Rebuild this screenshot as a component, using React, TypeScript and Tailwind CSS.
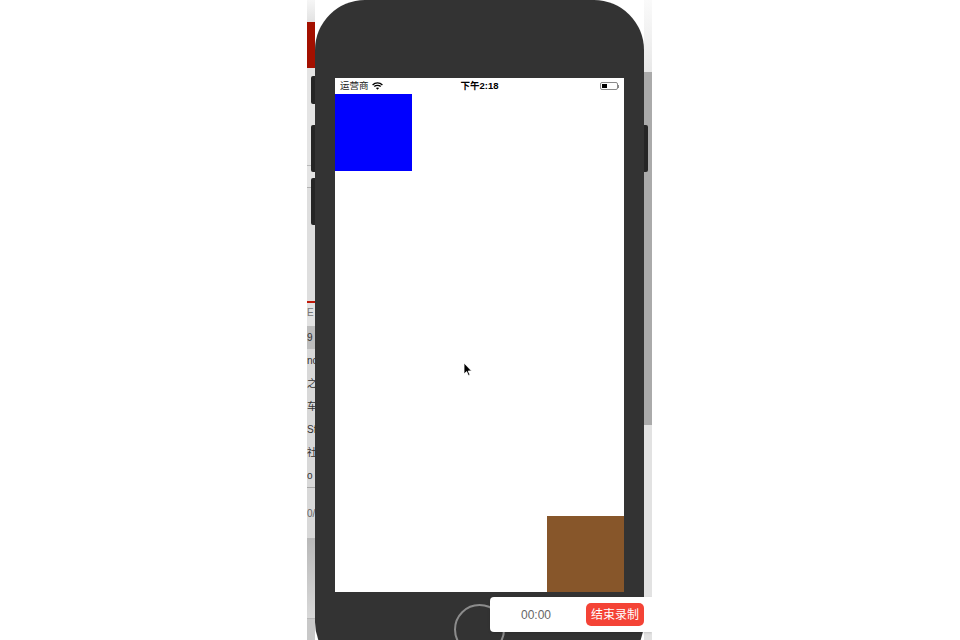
const CJK = "font-['Liberation_Sans','Noto_Sans_CJK_SC',sans-serif]";

const LIST_ROWS = ["9", "nc", "之运", "车运", "Sfi", "社", "o S"];

function WifiIcon() {
  return (
    <svg width="11" height="8" viewBox="0 0 11 8" fill="none" className="text-black">
      <path d="M0.6 2.9C3.3 0.2 7.7 0.2 10.4 2.9" stroke="currentColor" strokeWidth="1.4" />
      <path d="M2.3 4.6C4 2.9 7 2.9 8.7 4.6" stroke="currentColor" strokeWidth="1.4" />
      <path d="M3.9 6.1C4.8 5.3 6.2 5.3 7.1 6.1L5.5 7.8Z" fill="currentColor" />
    </svg>
  );
}

function Battery() {
  return (
    <div className="flex items-center">
      <div className="flex h-[8px] w-[18px] rounded-[2px] border border-[#8a8a8a] p-px">
        <div className="w-[5px] bg-black" />
      </div>
      <div className="h-[3px] w-px bg-[#8a8a8a]" />
    </div>
  );
}

function StatusBar() {
  return (
    <div className={`grid h-[16px] grid-cols-3 items-center bg-white pl-[5px] pr-[5px] text-[9.5px] leading-none text-[#222] ${CJK}`}>
      <div className="flex items-center gap-[3px]">
        <span>运营商</span>
        <WifiIcon />
      </div>
      <span className="text-center font-semibold text-black">下午2:18</span>
      <div className="flex justify-end">
        <Battery />
      </div>
    </div>
  );
}

function Screen() {
  return (
    <div className="flex h-[514px] w-[289px] flex-col bg-white">
      <StatusBar />
      <div className="flex flex-1 flex-col justify-between">
        <div className="h-[77px] w-[77px] bg-[#0000ff]" />
        <div className="h-[76px] w-[77px] self-end bg-[#87562a]" />
      </div>
    </div>
  );
}

function SideButton({ className }: { className: string }) {
  return <div className={`absolute w-[4px] bg-[#252525] ${className}`} />;
}

// the browser window behind the simulator, only a sliver of it shows
function LeftSliver() {
  return (
    <div className={`flex h-full w-[8px] flex-col overflow-hidden bg-[#dcdcdc] text-[10px] text-[#333] ${CJK}`}>
      <div className="h-[22px] shrink-0 bg-gradient-to-b from-[#f6f6f6] to-[#e2e2e2]" />
      <div className="h-[46px] shrink-0 bg-[#a31000]" />
      <div className="h-[98px] shrink-0 border-b border-[#b8b8b8] bg-[#e4e4e4]" />
      <div className="h-[22px] shrink-0 border-b border-[#b0b0b0] bg-[#e4e4e4]" />
      <div className="h-[115px] shrink-0 border-b-2 border-[#c01a0a] bg-[#dedede]" />
      <div className="h-[23px] shrink-0 whitespace-nowrap bg-[#e2e2e2] pt-[5px] leading-none text-[#777]">E</div>
      {LIST_ROWS.map((row, i) => (
        <div
          key={row}
          className={`flex h-[23px] shrink-0 items-center whitespace-nowrap ${i === 0 ? "bg-[#bdbdbd]" : "bg-[#d8d8d8]"}`}
        >
          {row}
        </div>
      ))}
      <div className="flex h-[51px] shrink-0 items-center whitespace-nowrap border-t border-[#a8a8a8] bg-[#d8d8d8] text-[#666]">
        0/
      </div>
      <div className="h-[80px] shrink-0 bg-gradient-to-b from-[#b8b8b8] to-[#d8d8d8]" />
      <div className="flex-1 border-t border-[#b8b8b8] bg-[#c8c8c8]" />
    </div>
  );
}

function RightSliver() {
  return (
    <div className="flex h-full w-[8px] flex-col">
      <div className="h-[72px] bg-gradient-to-b from-[#fafafa] to-[#e8e8e8]" />
      <div className="h-[353px] bg-[#aaaaaa]" />
      <div className="flex-1 bg-[#e2e2e2]" />
    </div>
  );
}

function Phone() {
  return (
    <div className="absolute left-[8px] top-0 flex h-[672px] w-[329px] flex-col items-center rounded-[50px] bg-[#333333] pt-[78px]">
      <SideButton className="-left-[4px] top-[76px] h-[28px] rounded-l-[2px]" />
      <SideButton className="-left-[4px] top-[125px] h-[47px] rounded-l-[2px]" />
      <SideButton className="-left-[4px] top-[178px] h-[47px] rounded-l-[2px]" />
      <SideButton className="-right-[4px] top-[125px] h-[47px] rounded-r-[2px]" />
      <Screen />
      <div className="mt-[12px] h-[51px] w-[51px] rounded-full border-2 border-[#8c8c8c]" />
    </div>
  );
}

function RecordBar() {
  return (
    <div className={`absolute right-0 top-[597px] flex h-[35px] w-[162px] items-center justify-between rounded-l-[4px] bg-white pl-[32px] pr-[8px] shadow-sm ${CJK}`}>
      <span className="-ml-[1px] text-[12px] text-[#666]">00:00</span>
      <button className="flex h-[23px] w-[58px] items-center justify-center rounded-[5px] bg-[#f44336] text-[12px] font-normal text-white">
        结束录制
      </button>
    </div>
  );
}

function Cursor() {
  return (
    <svg width="10" height="15" viewBox="0 0 10 15" className="absolute left-[156px] top-[362px]">
      <path d="M1 1V12L3.6 9.6L5.4 13.6L7 12.9L5.2 9H8.6Z" fill="#000" stroke="#fff" strokeWidth="0.8" />
    </svg>
  );
}

export default function App() {
  return (
    <div className="flex h-[640px] w-[960px] overflow-hidden bg-white pl-[307px]">
      <div className="relative flex h-[640px] w-[345px] justify-between overflow-hidden">
        <LeftSliver />
        <RightSliver />
        <Phone />
        <Cursor />
        <RecordBar />
      </div>
    </div>
  );
}
